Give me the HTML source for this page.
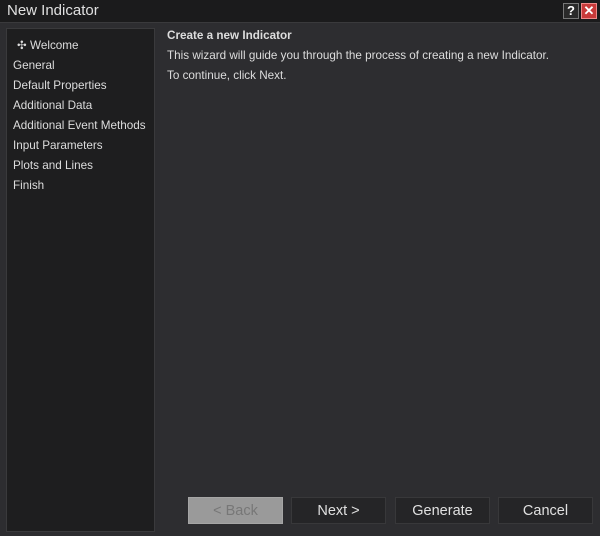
<!DOCTYPE html>
<html><head><style>
body{margin:0;width:600px;height:536px;background:#2d2d30;font-family:"Liberation Sans",sans-serif;position:relative;overflow:hidden;color:#ddd}
.t{position:absolute;left:0;top:0;width:600px;height:22px;background:#1b1b1c;border-bottom:1px solid #3a3a3c}
.t span{position:absolute;left:7px;top:2px;font-size:15px;color:#e0e0e0}
.hb{position:absolute;top:3px;width:16px;height:16px;font-size:13px;font-weight:bold;text-align:center;line-height:16px}
.lp{position:absolute;left:6px;top:28px;width:147px;height:502px;background:#1e1e1f;border:1px solid #3a3a3c}
.lp div{position:absolute;left:6px;font-size:11.7px;color:#ddd}
.c{position:absolute;left:167px;font-size:11.7px;color:#ddd}
.b{position:absolute;top:497px;width:93px;height:25px;background:#252527;border:1px solid #38383a;text-align:center;line-height:26px;font-size:14.5px;color:#e0e0e0}
</style></head><body>
<div class="t"><span>New Indicator</span>
<div class="hb" style="left:563px;background:#2a2a2a;border:1px solid #777;color:#fff;width:14px;height:14px;line-height:14px">?</div>
<div class="hb" style="left:581px;background:#c83a3a;color:#fff;border:1px solid #e88;width:14px;height:14px;line-height:14px">✕</div>
</div>
<div class="lp">
<div style="top:9px;left:10px">✣ Welcome</div>
<div style="top:30px">General</div>
<div style="top:50px">Default Properties</div>
<div style="top:70px">Additional Data</div>
<div style="top:90px">Additional Event Methods</div>
<div style="top:110px">Input Parameters</div>
<div style="top:130px">Plots and Lines</div>
<div style="top:150px">Finish</div>
</div>
<div class="c" style="top:29px;font-weight:bold">Create a new Indicator</div>
<div class="c" style="top:49px">This wizard will guide you through the process of creating a new Indicator.</div>
<div class="c" style="top:69px">To continue, click Next.</div>
<div class="b" style="left:188px;background:#9a9a9a;border-color:#a5a5a5;color:#777">&lt; Back</div>
<div class="b" style="left:291px">Next &gt;</div>
<div class="b" style="left:395px">Generate</div>
<div class="b" style="left:498px">Cancel</div>
</body></html>
